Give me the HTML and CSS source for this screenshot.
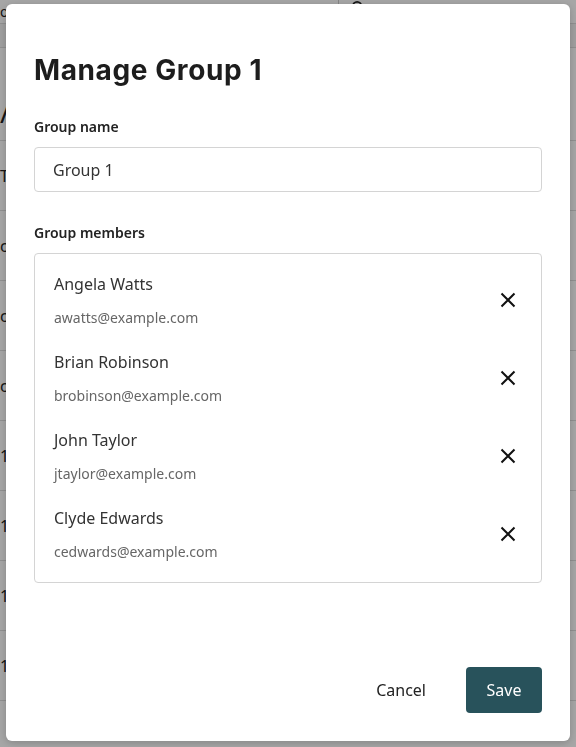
FILE: index.html
```html
<!DOCTYPE html>
<html lang="en">
<head>
<meta charset="utf-8">
<title>Manage Group 1</title>
<link rel="stylesheet" href="styles.css">
</head>
<body>
<div class="page">
  <header class="topbar">
    <span class="brand">ol</span>
    <div class="search">
      <svg class="search-icon" viewBox="0 0 16 16" width="14" height="14"><circle cx="7" cy="7" r="5" fill="none" stroke="#222" stroke-width="2"/><line x1="11" y1="11" x2="15" y2="15" stroke="#222" stroke-width="2"/></svg>
    </div>
  </header>
  <div class="subbar"></div>
  <div class="page-title">/</div>
  <div class="table">
    <div class="row">T</div>
    <div class="row">c</div>
    <div class="row">c</div>
    <div class="row">c</div>
    <div class="row">1</div>
    <div class="row">1</div>
    <div class="row">1</div>
    <div class="row">1</div>
  </div>
</div>
<div class="overlay"></div>
<div class="modal" role="dialog" aria-labelledby="modal-title">
  <h1 class="modal-title" id="modal-title">Manage Group 1</h1>
  <label class="field-label" for="group-name">Group name</label>
  <input class="text-input" id="group-name" type="text" value="Group 1">
  <div class="field-label members-label">Group members</div>
  <ul class="members">
    <li class="member">
      <div class="member-info">
        <span class="member-name">Angela Watts</span>
        <span class="member-email">awatts@example.com</span>
      </div>
      <button class="remove" aria-label="Remove Angela Watts"><svg viewBox="0 0 16 16" width="16" height="16"><path d="M1.5 1.5 L14.5 14.5 M14.5 1.5 L1.5 14.5" stroke="#111" stroke-width="2" fill="none"/></svg></button>
    </li>
    <li class="member">
      <div class="member-info">
        <span class="member-name">Brian Robinson</span>
        <span class="member-email">brobinson@example.com</span>
      </div>
      <button class="remove" aria-label="Remove Brian Robinson"><svg viewBox="0 0 16 16" width="16" height="16"><path d="M1.5 1.5 L14.5 14.5 M14.5 1.5 L1.5 14.5" stroke="#111" stroke-width="2" fill="none"/></svg></button>
    </li>
    <li class="member">
      <div class="member-info">
        <span class="member-name">John Taylor</span>
        <span class="member-email">jtaylor@example.com</span>
      </div>
      <button class="remove" aria-label="Remove John Taylor"><svg viewBox="0 0 16 16" width="16" height="16"><path d="M1.5 1.5 L14.5 14.5 M14.5 1.5 L1.5 14.5" stroke="#111" stroke-width="2" fill="none"/></svg></button>
    </li>
    <li class="member">
      <div class="member-info">
        <span class="member-name">Clyde Edwards</span>
        <span class="member-email">cedwards@example.com</span>
      </div>
      <button class="remove" aria-label="Remove Clyde Edwards"><svg viewBox="0 0 16 16" width="16" height="16"><path d="M1.5 1.5 L14.5 14.5 M14.5 1.5 L1.5 14.5" stroke="#111" stroke-width="2" fill="none"/></svg></button>
    </li>
  </ul>
  <div class="modal-footer">
    <button class="btn btn-text">Cancel</button>
    <button class="btn btn-primary">Save</button>
  </div>
</div>
</body>
</html>
```
FILE: styles.css
```css
* { box-sizing: border-box; }
html, body { margin: 0; padding: 0; }
body {
  width: 576px;
  height: 747px;
  overflow: hidden;
  background: #fff;
  font-family: "Noto Sans", "Open Sans", sans-serif;
  color: #333;
}
.page { width: 576px; }
.topbar {
  height: 24px;
  display: flex;
  align-items: center;
  justify-content: space-between;
  border-bottom: 1px solid #ddd;
}
.brand { font-size: 14px; line-height: 16px; color: #222; }
.search {
  width: 238px;
  height: 24px;
  border-left: 1px solid #ccc;
  display: flex;
  align-items: flex-start;
  padding: 0 0 0 12px;
}
.subbar { height: 24px; border-bottom: 1px solid #ddd; background: #f4f4f4; }
.page-title { height: 93px; font-size: 28px; padding-top: 45px; color: #222; border-bottom: 1px solid #ddd; }
.table { display: flex; flex-direction: column; }
.row {
  height: 70px;
  border-bottom: 1px solid #ddd;
  display: flex;
  align-items: center;
  font-size: 16px;
  color: #222;
}
.overlay {
  position: fixed;
  inset: 0;
  background: rgba(0, 0, 0, 0.35);
}
.modal {
  position: fixed;
  top: 4px;
  left: 6px;
  width: 564px;
  height: 737px;
  background: #fff;
  border-radius: 6px;
  box-shadow: 0 2px 8px rgba(0,0,0,0.2);
  padding: 48px 28px 28px 28px;
  display: flex;
  flex-direction: column;
}
.modal-title {
  margin: 0;
  font-family: "Inter", "Lato", sans-serif;
  font-weight: 700;
  font-size: 28px;
  line-height: 36px;
  color: #1d1d1d;
  letter-spacing: 0.6px;
}
.field-label {
  display: block;
  margin-top: 29px;
  font-size: 14px;
  line-height: 20px;
  font-weight: 600;
  color: #222;
}
.members-label { margin-top: 31px; }
.text-input {
  margin-top: 10px;
  width: 100%;
  height: 45px;
  border: 1px solid #d4d4d4;
  border-radius: 4px;
  padding: 0 18px;
  font-family: inherit;
  font-size: 16px;
  color: #333;
  outline: none;
}
.members {
  list-style: none;
  margin: 10px 0 0 0;
  padding: 18px 19px 20px 19px;
  border: 1px solid #d4d4d4;
  border-radius: 4px;
  display: flex;
  flex-direction: column;
  gap: 22px;
}
.member {
  display: flex;
  align-items: center;
  justify-content: space-between;
}
.member-info { display: flex; flex-direction: column; gap: 12px; }
.member-name { font-size: 16px; line-height: 24px; color: #333; }
.member-email { font-size: 14px; line-height: 20px; color: #666; }
.remove {
  border: 0;
  background: none;
  padding: 0;
  margin-right: 6px;
  width: 16px;
  height: 16px;
  display: flex;
  cursor: pointer;
}
.modal-footer {
  margin-top: auto;
  display: flex;
  justify-content: flex-end;
  align-items: center;
  gap: 40px;
}
.btn {
  font-family: inherit;
  font-size: 16px;
  border: 0;
  cursor: pointer;
}
.btn-text { background: none; color: #222; padding: 0; }
.btn-primary {
  background: #28525b;
  color: #fff;
  height: 46px;
  width: 76px;
  border-radius: 4px;
}
```
